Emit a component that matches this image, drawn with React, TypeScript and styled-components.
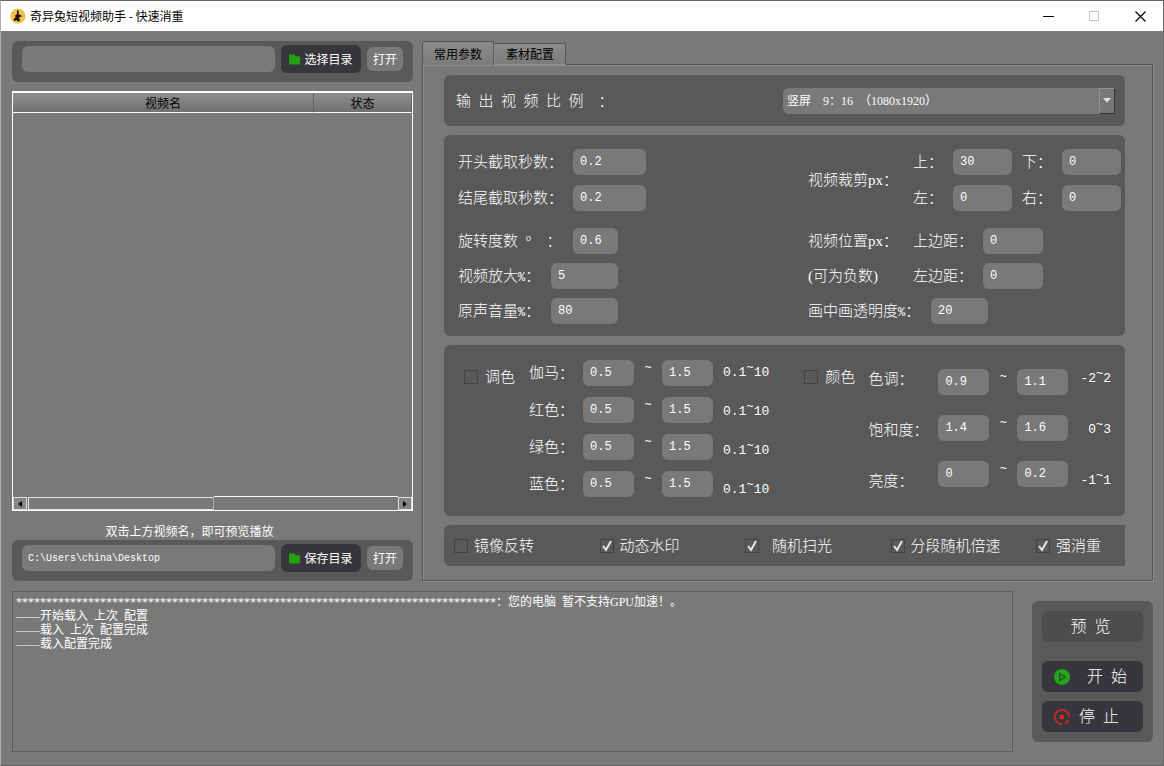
import React from "react";
import styled, { createGlobalStyle } from "styled-components";

const CJK = `"Noto Sans CJK SC", sans-serif`;
const SERIF = `"Liberation Serif", ${CJK}`;
const MONO = `"Liberation Mono", ${CJK}`;

const Global = createGlobalStyle`
  * { box-sizing: border-box; }
  body { margin: 0; background: #797979; color: #fff; font: 15px/20px ${SERIF}; font-weight: 300; }
  button, input, select, textarea { font: inherit; color: inherit; margin: 0; }
`;

const Window = styled.div`
  min-height: 100vh;
  display: flex;
  flex-direction: column;
  border: 1px solid #646466;
  border-left-color: #aeb0ba;
  background: #797979;
`;

const TitleBar = styled.header`
  display: flex;
  align-items: center;
  height: 30px;
  padding-left: 9px;
  background: #fff;
  color: #000;
`;

const Title = styled.h1`
  flex: 1;
  margin: 0 0 0 4px;
  font: 400 12px/16px ${CJK};
`;

const WindowButton = styled.button<{ $dim?: boolean }>`
  display: grid;
  place-items: center;
  width: 46px;
  height: 30px;
  padding: 0;
  border: 0;
  background: none;
  color: ${(p) => (p.$dim ? "#c4c4c4" : "#000")};
`;

const Main = styled.main`
  display: flex;
  flex: 1;
  flex-direction: column;
  gap: 10px;
  padding: 10px 10px 12px 11px;
`;

const Columns = styled.div`
  display: grid;
  grid-template-columns: minmax(0, 401fr) minmax(0, 731fr);
  gap: 9px;
`;

const Column = styled.section`
  display: flex;
  flex-direction: column;
`;

const PathBar = styled.div`
  display: flex;
  align-items: flex-start;
  height: 41px;
  padding: 4px 10px;
  border-radius: 6px;
  background: #595959;
`;

const PathInput = styled.input`
  flex: 1;
  min-width: 0;
  height: 26px;
  margin-top: 1px;
  padding: 0 6px;
  border: 0;
  border-radius: 6px;
  background: #797979;
  font: 10px/14px ${MONO};
`;

const PickButton = styled.button`
  display: flex;
  align-items: center;
  justify-content: center;
  gap: 4px;
  width: 80px;
  height: 28px;
  margin-left: 6px;
  padding: 0;
  border: 0;
  border-radius: 6px;
  background: #37363c;
  font: 400 12px/16px ${CJK};
`;

const OpenButton = styled.button`
  width: 36px;
  height: 24px;
  margin: 2px 0 0 6px;
  padding: 0;
  border: 0;
  border-radius: 6px;
  background: #797979;
  font: 400 12px/16px ${CJK};
`;

const ListFrame = styled.div`
  display: flex;
  flex: 1;
  flex-direction: column;
  margin: 9px 0 11px;
  border: 1px solid #fff;
  border-top-width: 2px;
`;

const ListTable = styled.table`
  width: 100%;
  border-collapse: separate;
  border-spacing: 0;
  table-layout: fixed;
  color: #000;
  font: 400 12px/16px ${CJK};
`;

const HeadCell = styled.th<{ $w?: string }>`
  width: ${(p) => p.$w ?? "auto"};
  height: 20px;
  padding: 0;
  border-right: 1px solid #626262;
  border-bottom: 1px solid #fff;
  background: linear-gradient(#8f8f8f, #707070);
  font-weight: 400;
`;

const ScrollTrack = styled.div`
  display: flex;
  height: 14px;
  margin-top: auto;
`;

const ScrollArrow = styled.button`
  display: grid;
  place-items: center;
  width: 14px;
  height: 13px;
  margin-top: 1px;
  padding: 0;
  border: 1px solid #ddd;
  background: #858585;
  color: #000;
`;

const ScrollThumb = styled.div`
  flex: 1;
  margin: 1px 0 0 1px;
  border: 1px solid #e4e4e4;
  border-right-color: #aaa;
`;

const ScrollRest = styled.div`
  flex: 1;
  border-top: 1px solid #fff;
`;

const Hint = styled.p`
  margin: 0;
  padding-right: 46px;
  text-align: center;
  font: 400 12px/18px ${CJK};
`;

const Tabs = styled.div`
  display: flex;
  align-items: flex-end;
  height: 24px;
  z-index: 1;
`;

const Tab = styled.button<{ $active?: boolean }>`
  width: 72px;
  height: ${(p) => (p.$active ? 24 : 22)}px;
  padding: 0;
  border: 1px solid;
  border-color: #555 #555 ${(p) => (p.$active ? "#7d7d7d" : "#8f8f8f")} ${(p) => (p.$active ? "#555" : "#8a8a8a")};
  border-bottom-width: ${(p) => (p.$active ? 0 : 1)}px;
  border-radius: 2px 2px 0 0;
  background: linear-gradient(#8b8b8b, #7b7b7b);
  color: #000;
  font: 400 12px/16px ${CJK};
`;

const TabPage = styled.div`
  display: flex;
  flex: 1;
  flex-direction: column;
  gap: 9px;
  margin-top: -1px;
  padding: 10px 27px 14px 21px;
  border: 1px solid #555;
  box-shadow: inset 1px 1px #8f8f8f, 1px 1px #8f8f8f;
`;

const Card = styled.div<{ $h: number; $pad: string; $align?: string; $square?: boolean }>`
  display: flex;
  justify-content: space-between;
  align-items: ${(p) => p.$align ?? "flex-start"};
  min-height: ${(p) => p.$h}px;
  padding: ${(p) => p.$pad};
  border-radius: ${(p) => (p.$square ? "6px 0 0 6px" : "6px")};
  background: #595959;
`;

const Label = styled.label<{ $w?: number }>`
  width: ${(p) => (p.$w ? `${p.$w}px` : "auto")};
  font: 300 15px/20px ${SERIF};
  white-space: pre;
`;

const Percent = styled.span`
  font: 12px/16px ${MONO};
`;

const NumberInput = styled.input<{ $w: number }>`
  width: ${(p) => p.$w}px;
  height: 26px;
  padding: 0 7px;
  border: 0;
  border-radius: 6px;
  background: #797979;
  font: 12px/16px ${MONO};
`;

const SelectBox = styled.div`
  position: relative;
  width: 332px;
`;

const RatioSelect = styled.select`
  display: block;
  width: 100%;
  height: 26px;
  padding: 0 4px;
  border: 0;
  border-radius: 6px 0 0 6px;
  appearance: none;
  background: #797979;
  font: 400 12px/16px ${SERIF};
`;

const SelectArrow = styled.span`
  position: absolute;
  top: 0;
  right: 0;
  display: grid;
  place-items: center;
  width: 16px;
  height: 26px;
  border: 1px solid;
  border-color: #929292 #333 #333 #929292;
  background: #777;
  pointer-events: none;
`;

const Stack = styled.div<{ $gap: number; $top?: number }>`
  display: flex;
  flex-direction: column;
  gap: ${(p) => p.$gap}px;
  margin-top: ${(p) => p.$top ?? 0}px;
`;

const Row = styled.div<{ $gap?: number }>`
  display: flex;
  align-items: center;
  gap: ${(p) => p.$gap ?? 0}px;
  height: 26px;
`;

const Crop = styled.div`
  display: flex;
  align-items: center;
`;

const ColorGroup = styled.div`
  display: flex;
  align-items: flex-start;
`;

const ColorLabel = styled.span`
  width: 54px;
  margin-left: 14px;
`;

const LabelList = styled(Stack)`
  width: 70px;
  margin-left: 13px;
`;

const RangeList = styled(Stack)<{ $left: number }>`
  margin-left: ${(p) => p.$left}px;
`;

const CheckLabel = styled.label<{ $gap: number }>`
  display: flex;
  align-items: center;
  gap: ${(p) => p.$gap}px;
  font: 300 15px/20px ${SERIF};
  white-space: pre;
`;

const CheckInput = styled.input`
  appearance: none;
  flex: none;
  width: 14px;
  height: 14px;
  border: 1px solid #434343;
  background: #595959;
  &:checked {
    background: center / 12px 12px no-repeat
      url("data:image/svg+xml,%3Csvg xmlns='http://www.w3.org/2000/svg' viewBox='0 0 12 12'%3E%3Cpath d='M2 6l3 4 5-9' fill='none' stroke='%23e6e6e6' stroke-width='2'/%3E%3C/svg%3E");
  }
`;

const Range = styled.span`
  height: 26px;
  font: 13px/26px ${MONO};
  text-align: right;
`;

const RaisedTilde = styled.span`
  font: 12px/12px ${MONO};
  vertical-align: 5px;
`;

const Separator = styled.span`
  width: 28px;
  padding-bottom: 10px;
  text-align: center;
  font: 12px/16px ${MONO};
`;

const Options = styled.div`
  display: grid;
  flex: 1;
  grid-template-columns: repeat(4, 1fr) 89px;
`;

const Footer = styled.div`
  display: flex;
  align-items: flex-start;
  gap: 19px;
`;

const Log = styled.textarea`
  display: block;
  flex: 1;
  height: 161px;
  padding: 3px;
  border: 1px solid #5c5c5c;
  outline: 0;
  resize: none;
  background: #797979;
  font: 400 12px/14px ${SERIF};
`;

const Actions = styled.div`
  display: flex;
  flex-direction: column;
  gap: 9px;
  width: 121px;
  margin-top: 10px;
  padding: 10px;
  border-radius: 6px;
  background: #595959;
`;

const ActionButton = styled.button<{ $plain?: boolean; $gap?: number }>`
  display: flex;
  align-items: center;
  justify-content: ${(p) => (p.$plain ? "center" : "flex-start")};
  gap: ${(p) => p.$gap ?? 0}px;
  height: 31px;
  margin-bottom: ${(p) => (p.$plain ? 10 : 0)}px;
  padding: ${(p) => (p.$plain ? "0 4px 0 0" : "0 0 0 11px")};
  border: 0;
  border-radius: 6px;
  background: ${(p) => (p.$plain ? "#4d4d4d" : "#37363c")};
  font: 300 16px/20px ${SERIF};
  white-space: pre;
`;

const Logo = () => (
  <svg width="16" height="16" viewBox="0 0 16 16" aria-hidden="true">
    <circle cx="8" cy="8" r="7.6" fill="#f2c14b" />
    <path d="M7 1.800C8.500 2 9 4 8.600 6.200l2.600 1.100.3 1.400-2.400.3.100 1.400 1 2.200-2.200 1.200-1.500-1.800-2.300 1.200-.8-1.700L5.400 9.400 5.200 7.200l1.700-.8z" fill="#1d1608" />
  </svg>
);

const Folder = () => (
  <svg width="11" height="11" viewBox="0 0 11 11" aria-hidden="true">
    <path d="M0 1.500Q0 .5 1 .5h4.400l1.400 1.700H10q1 0 1 1V9.500q0 1-1 1H1q-1 0-1-1z" fill="#23a014" />
  </svg>
);

const StartIcon = () => (
  <svg width="18" height="18" viewBox="0 0 18 18" aria-hidden="true">
    <circle cx="9" cy="9" r="8" fill="#23a31c" />
    <path d="M6.700 5.500v7L12.200 9z" fill="none" stroke="#25501f" strokeWidth="1.300" strokeLinejoin="round" />
  </svg>
);

const StopIcon = () => (
  <svg width="18" height="18" viewBox="0 0 18 18" aria-hidden="true">
    <path d="M9.500 16.200A7.200 7.200 0 1 1 16.200 9.500M15.400 12.200a7.200 7.200 0 0 1-3.200 3.200" fill="none" stroke="#c7281c" strokeWidth="1.900" />
    <rect x="7" y="7" width="4" height="4" fill="#dc2a1c" />
  </svg>
);

const Path = ({ name, value, action }: { name: string; value: string; action: string }) => (
  <PathBar>
    <PathInput aria-label={name} defaultValue={value} />
    <PickButton><Folder />{action}</PickButton>
    <OpenButton>打开</OpenButton>
  </PathBar>
);

const Field = ({ id, label, unit, labelWidth, value, width }: {
  id: string; label: string; unit?: boolean; labelWidth: number; value: string; width: number;
}) => (
  <Row>
    <Label htmlFor={id} $w={labelWidth}>{label}{unit && <><Percent>%</Percent>：</>}</Label>
    <NumberInput id={id} $w={width} defaultValue={value} />
  </Row>
);

const Pair = ({ name, low, high }: { name: string; low: string; high: string }) => (
  <Row>
    <NumberInput aria-label={`${name} 最小`} $w={51} defaultValue={low} />
    <Separator>~</Separator>
    <NumberInput aria-label={`${name} 最大`} $w={51} defaultValue={high} />
  </Row>
);

const Span = ({ from, to }: { from: string; to: string }) => (
  <Range>{from}<RaisedTilde>~</RaisedTilde>{to}</Range>
);

const Check = ({ label, checked, gap = 6 }: { label: string; checked?: boolean; gap?: number }) => (
  <CheckLabel $gap={gap}><CheckInput type="checkbox" defaultChecked={checked} />{label}</CheckLabel>
);

const channels = ["伽马", "红色", "绿色", "蓝色"];

const logText = `${"*".repeat(80)}：您的电脑  暂不支持GPU加速！。
——开始载入  上次  配置
——载入  上次  配置完成
——载入配置完成`;

export default function App() {
  return (
    <Window>
      <Global />
      <TitleBar>
        <Logo />
        <Title>奇异兔短视频助手 - 快速消重</Title>
        <WindowButton aria-label="最小化">
          <svg width="11" height="11"><path d="M0 5.500h11" stroke="currentColor" /></svg>
        </WindowButton>
        <WindowButton aria-label="最大化" $dim>
          <svg width="11" height="11"><path d="M.5.5h9v9h-9z" fill="none" stroke="currentColor" /></svg>
        </WindowButton>
        <WindowButton aria-label="关闭">
          <svg width="11" height="11"><path d="M.5.5l10 10M10.500.5l-10 10" stroke="currentColor" strokeWidth="1.200" /></svg>
        </WindowButton>
      </TitleBar>
      <Main>
        <Columns>
          <Column>
            <Path name="视频目录" value="" action="选择目录" />
            <ListFrame>
              <ListTable>
                <thead>
                  <tr><HeadCell $w="75.500%">视频名</HeadCell><HeadCell>状态</HeadCell></tr>
                </thead>
              </ListTable>
              <ScrollTrack>
                <ScrollArrow aria-label="向左"><svg width="4" height="6"><path d="M4 0v6L0 3z" /></svg></ScrollArrow>
                <ScrollThumb />
                <ScrollRest />
                <ScrollArrow aria-label="向右"><svg width="4" height="6"><path d="M0 0v6l4-3z" /></svg></ScrollArrow>
              </ScrollTrack>
            </ListFrame>
            <Hint>双击上方视频名，即可预览播放</Hint>
            <Path name="保存目录路径" value="C:\Users\china\Desktop" action="保存目录" />
          </Column>

          <Column>
            <Tabs role="tablist">
              <Tab role="tab" aria-selected="true" $active>常用参数</Tab>
              <Tab role="tab" aria-selected="false">素材配置</Tab>
            </Tabs>
            <TabPage>
              <Card $h={51} $pad="0 10px 0 12px" $align="center">
                <Label htmlFor="ratio">输  出  视  频  比  例    ：</Label>
                <SelectBox>
                  <RatioSelect id="ratio">
                    <option>竖屏{"\u00a0\u00a0\u00a0\u00a0"}9：16{"\u00a0\u00a0"}（1080x1920）</option>
                  </RatioSelect>
                  <SelectArrow>
                    <svg width="8" height="5" aria-hidden="true"><path d="M0 0h8L4 4.500z" fill="#e4e4e4" /></svg>
                  </SelectArrow>
                </SelectBox>
              </Card>

              <Card $h={201} $pad="14px 4px 12px 14px">
                <Stack $gap={17}>
                  <Stack $gap={10}>
                    <Field id="head" label="开头截取秒数：" labelWidth={115} value="0.2" width={73} />
                    <Field id="tail" label="结尾截取秒数：" labelWidth={115} value="0.2" width={73} />
                  </Stack>
                  <Stack $gap={9}>
                    <Field id="rotate" label="旋转度数  °    ：" labelWidth={115} value="0.6" width={45} />
                    <Field id="zoom" label="视频放大" unit labelWidth={93} value="5" width={67} />
                    <Field id="volume" label="原声音量" unit labelWidth={93} value="80" width={67} />
                  </Stack>
                </Stack>
                <Stack $gap={17}>
                  <Crop>
                    <Label as="span" $w={105}>视频裁剪px：</Label>
                    <Stack $gap={10}>
                      <Row $gap={10}>
                        <Field id="top" label="上：" labelWidth={40} value="30" width={59} />
                        <Field id="bottom" label="下：" labelWidth={40} value="0" width={59} />
                      </Row>
                      <Row $gap={10}>
                        <Field id="left" label="左：" labelWidth={40} value="0" width={59} />
                        <Field id="right" label="右：" labelWidth={40} value="0" width={59} />
                      </Row>
                    </Stack>
                  </Crop>
                  <Stack $gap={9}>
                    <Row>
                      <Label as="span" $w={105}>视频位置px：</Label>
                      <Field id="mtop" label="上边距：" labelWidth={70} value="0" width={60} />
                    </Row>
                    <Row>
                      <Label as="span" $w={105}>(可为负数)</Label>
                      <Field id="mleft" label="左边距：" labelWidth={70} value="0" width={60} />
                    </Row>
                    <Field id="opacity" label="画中画透明度" unit labelWidth={123} value="20" width={57} />
                  </Stack>
                </Stack>
              </Card>

              <Card $h={171} $pad="15px 14px 13px 20px">
                <ColorGroup>
                  <Stack $gap={0} $top={7}><Check label="调色" gap={7} /></Stack>
                  <Stack $gap={11}>
                    {channels.map((n) => (
                      <Row key={n}><ColorLabel>{n}：</ColorLabel><Pair name={n} low="0.5" high="1.5" /></Row>
                    ))}
                  </Stack>
                  <RangeList $gap={13} $left={10}>
                    {channels.map((n) => <Span key={n} from="0.1" to="10" />)}
                  </RangeList>
                </ColorGroup>
                <ColorGroup>
                  <Stack $gap={0} $top={7}><Check label="颜色" gap={7} /></Stack>
                  <LabelList $gap={25} $top={6}>
                    {["色调：", "饱和度：", "亮度："].map((n) => <Row key={n}><Label as="span">{n}</Label></Row>)}
                  </LabelList>
                  <Stack $gap={20} $top={9}>
                    <Pair name="色调" low="0.9" high="1.1" />
                    <Pair name="饱和度" low="1.4" high="1.6" />
                    <Pair name="亮度" low="0" high="0.2" />
                  </Stack>
                  <RangeList $gap={25} $top={6} $left={12}>
                    <Span from="-2" to="2" />
                    <Span from="0" to="3" />
                    <Span from="-1" to="1" />
                  </RangeList>
                </ColorGroup>
              </Card>

              <Card $h={41} $pad="0 0 0 10px" $align="center" $square>
                <Options>
                  <Check label="镜像反转" />
                  <Check label="动态水印" checked />
                  <Check label="随机扫光" checked gap={13} />
                  <Check label="分段随机倍速" checked />
                  <Check label="强消重" checked />
                </Options>
              </Card>
            </TabPage>
          </Column>
        </Columns>

        <Footer>
          <Log aria-label="日志" readOnly value={logText} />
          <Actions>
            <ActionButton $plain>预  览</ActionButton>
            <ActionButton $gap={16}><StartIcon />开  始</ActionButton>
            <ActionButton $gap={8}><StopIcon />停  止</ActionButton>
          </Actions>
        </Footer>
      </Main>
    </Window>
  );
}
